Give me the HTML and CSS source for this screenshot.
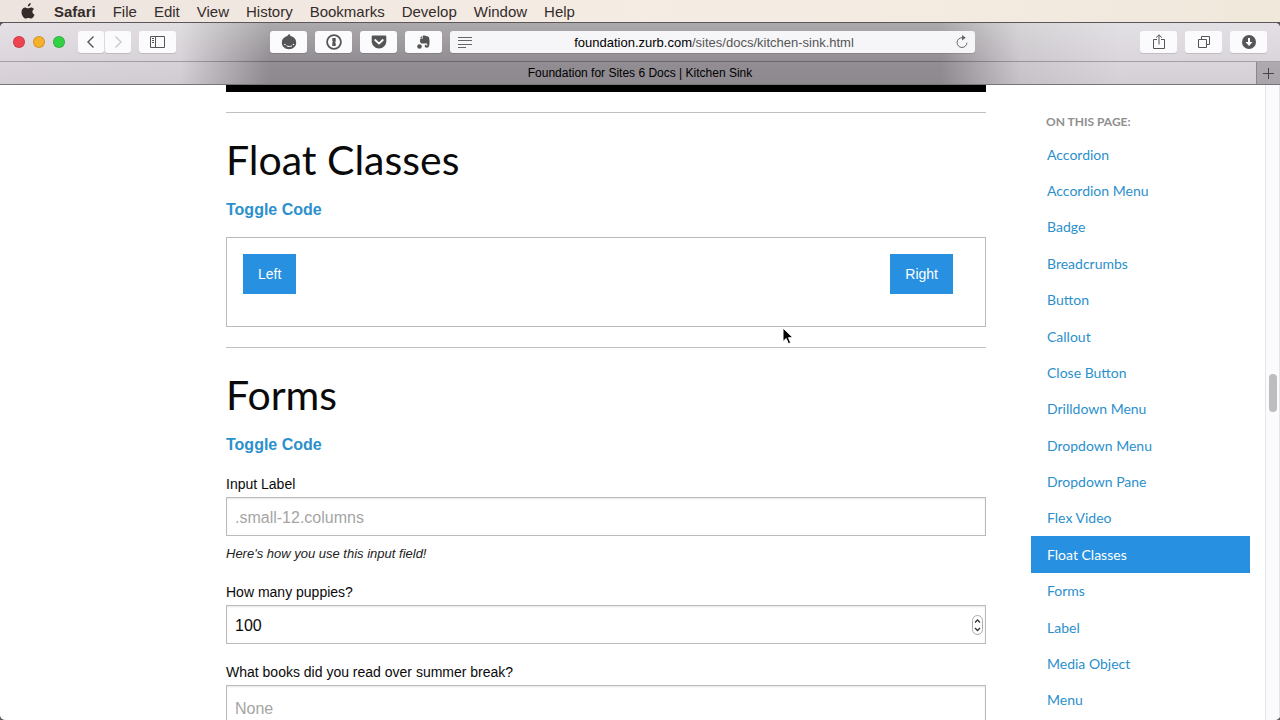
FILE: index.html
```html
<!DOCTYPE html>
<html lang="en">

<head>
    <meta charset="UTF-8" />
    <title>Foundation for Sites 6 Docs | Kitchen Sink</title>
    <link rel="stylesheet" href="styles.css">
</head>

<body>
    <nav class="menubar">
        <svg class="apple" width="14" height="17" viewBox="0 0 14 17" aria-hidden="true">
            <path d="M9.800 0c.1 1.900-1.400 3.600-3 3.600C6.600 1.900 8.200.1 9.800 0z" />
            <path d="M7 5.200c.8 0 1.700-.8 3.100-.8 1.100 0 2.200.6 2.900 1.500-2.400 1.500-2 4.700.6 5.700-.6 1.700-1.900 4-3.300 4-1.100 0-1.500-.6-2.900-.6s-1.800.6-2.800.6C2.800 15.600.5 12.200.5 9c0-3 1.900-4.600 3.700-4.600 1.300 0 2.100.8 2.800.8z" />
        </svg>
        <a class="app" href="#">Safari</a>
        <a href="#">File</a>
        <a href="#">Edit</a>
        <a href="#">View</a>
        <a href="#">History</a>
        <a href="#">Bookmarks</a>
        <a href="#">Develop</a>
        <a href="#">Window</a>
        <a href="#">Help</a>
    </nav>

    <div class="window">
        <header class="chrome">
            <div class="toolbar">
                <div class="tools">
                    <div class="lights">
                        <button class="light close" aria-label="Close"></button>
                        <button class="light minimize" aria-label="Minimize"></button>
                        <button class="light zoom" aria-label="Zoom"></button>
                    </div>
                    <div class="history">
                        <button class="tool narrow" aria-label="Back">
                            <svg width="10" height="14" viewBox="0 0 10 14"><path d="M7.500 1.500L2 7l5.500 5.500" fill="none" stroke="#555" stroke-width="1.400" /></svg>
                        </button>
                        <button class="tool narrow" aria-label="Forward">
                            <svg width="10" height="14" viewBox="0 0 10 14"><path d="M2.500 1.500L8 7l-5.500 5.500" fill="none" stroke="#c8c8ca" stroke-width="1.400" /></svg>
                        </button>
                    </div>
                    <button class="tool" aria-label="Sidebar">
                        <svg width="15" height="12" viewBox="0 0 15 12" fill="none" stroke="#555"><path d="M.5.5h14v11H.5zM5.500.5v11M2 2.500h2M2 4.500h2M2 6.500h2" /></svg>
                    </button>
                </div>
                <div class="center">
                    <button class="tool" aria-label="Ghostery">
                        <svg width="16" height="16" viewBox="0 0 16 16"><path d="M8 0c1.200.5 1.400 1.200 1.200 1.900 1 .1 1.700.4 2.400.9C13.800 4 15.200 6 15.200 8.500c0 4-3.200 6.700-7.200 6.700S.8 12.500.8 8.500c0-3 1.700-5 4.200-6C6.500 1.900 7.300 1.200 8 0z" fill="#555" /><path d="M5.500 11.800c1.800.9 3.800.9 5.600 0" stroke="#fff" fill="none" /><circle cx="3.900" cy="10.500" r=".7" fill="#fff" /><circle cx="12.500" cy="10.500" r=".7" fill="#fff" /></svg>
                    </button>
                    <button class="tool" aria-label="1Password">
                        <svg width="16" height="16" viewBox="0 0 16 16"><circle cx="8" cy="8" r="6.900" fill="none" stroke="#555" stroke-width="1.800" /><path d="M6.300 4h3.400v3.500l-.8.700.8.700V12H6.300V8.500l.8-.7-.8-.7z" fill="#555" /></svg>
                    </button>
                    <button class="tool" aria-label="Pocket">
                        <svg width="16" height="14" viewBox="0 0 16 14"><path d="M2 .5h12c.8 0 1.300.5 1.300 1.300v4.400c0 4-3.300 7.200-7.300 7.200S.7 10.200.7 6.200V1.800C.7 1 1.200.5 2 .5z" fill="#555" /><path d="M4.200 5L8 8.600 11.800 5" fill="none" stroke="#fff" stroke-width="1.800" stroke-linecap="round" stroke-linejoin="round" /></svg>
                    </button>
                    <button class="tool" aria-label="Evernote">
                        <svg width="16" height="16" viewBox="0 0 16 16"><path d="M6.300 1.700v2.200H4zM7 1.600c1.800-.3 2.900 0 3.600.6 1.500 0 2.300.5 2.600 2 .5 2.500.5 5-.1 7.900-.3 1.300-1.100 1.700-2.200 1.700-1.500 0-2.200-.8-2.200-1.700 0-1 .7-1.600 1.700-1.600v1.300h.8c.5-1 .1-2.300-1-2.600-1.200-.2-1.700.1-2.500.3-2 .2-3.200-.5-3.500-1.600-.3-1.100-.2-2.400.3-3.300H7z" fill="#555" /><circle cx="3.500" cy="12.500" r="2.300" fill="#555" /></svg>
                    </button>
                    <div class="address">
                        <svg width="14" height="11" viewBox="0 0 14 11" stroke="#666"><path d="M0 .5h14M0 3.500h14M0 7.500h14M0 10.500h8" /></svg>
                        <a class="url" href="#">foundation.zurb.com<span>/sites/docs/kitchen-sink.html</span></a>
                        <button class="reload" aria-label="Reload">
                            <svg width="12" height="14" viewBox="0 0 12 14"><path d="M7 2.700H6a4.900 4.900 0 1 0 4.900 5" fill="none" stroke="#666" /><path d="M6 0l3.800 2.700L6 5.400z" fill="#666" /></svg>
                        </button>
                    </div>
                </div>
                <div class="actions">
                    <button class="tool" aria-label="Share">
                        <svg width="12" height="16" viewBox="0 0 12 16" fill="none" stroke="#555"><path d="M4 5.500H.5v9h11v-9H8M6 10.500V1M3 3.700L6 .8l3 2.900" /></svg>
                    </button>
                    <button class="tool" aria-label="Show all tabs">
                        <svg width="12" height="12" viewBox="0 0 12 12" fill="none" stroke="#555"><path d="M.5 3.500h8v8h-8zM3.500 3.500v-3h8v8h-3" /></svg>
                    </button>
                    <button class="tool" aria-label="Downloads">
                        <svg width="14" height="14" viewBox="0 0 14 14"><circle cx="7" cy="7" r="7" fill="#555" /><path d="M6 3h2v4h2.500L7 11 3.500 7H6z" fill="#fff" /></svg>
                    </button>
                </div>
            </div>
            <div class="tabs">
                <div class="tab">Foundation for Sites 6 Docs | Kitchen Sink</div>
                <button class="new-tab" aria-label="New tab">
                    <svg width="11" height="11" viewBox="0 0 11 11" stroke="#444"><path d="M5.500 0v11M0 5.500h11" /></svg>
                </button>
            </div>
        </header>

        <div class="page">
            <main class="docs">
                <div class="video"></div>

                <section>
                    <h2>Float Classes</h2>
                    <a class="toggle" href="#">Toggle Code</a>
                    <div class="callout">
                        <button class="button">Left</button>
                        <button class="button">Right</button>
                    </div>
                </section>

                <section>
                    <h2>Forms</h2>
                    <a class="toggle" href="#">Toggle Code</a>
                    <form>
                        <label for="columns">Input Label</label>
                        <input type="text" id="columns" placeholder=".small-12.columns" aria-describedby="columnsHelp" />
                        <p class="help" id="columnsHelp">Here's how you use this input field!</p>

                        <label for="puppies">How many puppies?</label>
                        <div class="number">
                            <input type="number" id="puppies" value="100" />
                            <svg class="stepper" width="11" height="21" viewBox="0 0 11 21" fill="none"><rect x=".5" y=".5" width="10" height="19" rx="5" fill="#fff" stroke="#aaa" /><path d="M3 7.500L5.500 5 8 7.500M3 13l2.500 2.500L8 13" stroke="#333" stroke-width="1.300" /></svg>
                        </div>

                        <label for="books">What books did you read over summer break?</label>
                        <textarea id="books" placeholder="None"></textarea>
                    </form>
                </section>
            </main>

            <aside class="toc">
                <h3>On this page:</h3>
                <ul>
                    <li><a href="#">Accordion</a></li>
                    <li><a href="#">Accordion Menu</a></li>
                    <li><a href="#">Badge</a></li>
                    <li><a href="#">Breadcrumbs</a></li>
                    <li><a href="#">Button</a></li>
                    <li><a href="#">Callout</a></li>
                    <li><a href="#">Close Button</a></li>
                    <li><a href="#">Drilldown Menu</a></li>
                    <li><a href="#">Dropdown Menu</a></li>
                    <li><a href="#">Dropdown Pane</a></li>
                    <li><a href="#">Flex Video</a></li>
                    <li><a class="active" href="#">Float Classes</a></li>
                    <li><a href="#">Forms</a></li>
                    <li><a href="#">Label</a></li>
                    <li><a href="#">Media Object</a></li>
                    <li><a href="#">Menu</a></li>
                </ul>
            </aside>

            <div class="scrollbar">
                <div class="thumb"></div>
            </div>
        </div>
    </div>

    <svg class="cursor" width="12" height="19" viewBox="0 0 12 19" aria-hidden="true">
        <path d="M1 1v13.500l3.200-3 2.200 5.200 2.300-1-2.200-5H11z" fill="#000" stroke="#fff" />
    </svg>
</body>

</html>
```
FILE: styles.css
```css
* {
    box-sizing: border-box;
}

body {
    margin: 0;
    height: 100vh;
    display: flex;
    flex-direction: column;
    overflow: hidden;
    background: #5c5658;
    font-family: "Liberation Sans", Helvetica, Arial, sans-serif;
    color: #0a0a0a;
}

button {
    border: none;
    padding: 0;
    font-family: inherit;
    cursor: pointer;
}

a {
    color: #2b90cc;
    text-decoration: none;
}

svg {
    display: block;
    flex: none;
}

/* Menu bar */
.menubar {
    flex: none;
    display: flex;
    align-items: center;
    gap: 17px;
    height: 22px;
    padding-left: 21px;
    background: linear-gradient(90deg, #ede4df, #f5ede4 50%, #f1e8dc);
    font-size: 15px;
}

.menubar a {
    color: #352c2a;
}

.menubar .app {
    font-weight: bold;
}

.apple {
    margin-right: 2px;
    fill: #352c2a;
}

/* Browser window */
.window {
    flex: 1;
    min-height: 0;
    display: flex;
    flex-direction: column;
    margin-top: 1px;
    border-radius: 5px;
    overflow: hidden;
    background: #fff;
}

.chrome {
    flex: none;
    background:
        linear-gradient(rgba(255, 255, 255, 0.25), rgba(255, 255, 255, 0) 38px, rgba(0, 0, 0, 0.03)),
        linear-gradient(90deg, #dcd6dc 0, #d6d2d7 180px, #918d92 270px, #918d92 calc(100% - 340px), #cbc7cc calc(100% - 260px), #dad6dc calc(100% - 160px), #dad5db);
    border-bottom: 1px solid #77737a;
}

.toolbar {
    display: grid;
    grid-template-columns: 270px minmax(0, 1fr) 305px;
    align-items: center;
    height: 38px;
}

.tools,
.center,
.actions,
.lights,
.history {
    display: flex;
    align-items: center;
    gap: 8px;
}

.tools {
    padding-left: 13px;
}

.lights {
    margin-right: 5px;
}

.history {
    gap: 1px;
}

.actions {
    justify-content: flex-end;
    padding-right: 13px;
}

.light {
    width: 12px;
    height: 12px;
    border: 1px solid rgba(0, 0, 0, 0.15);
    border-radius: 50%;
}

.close {
    background: #ee4450;
}

.minimize {
    background: #f6b02c;
}

.zoom {
    background: #32d244;
}

.tool {
    flex: none;
    display: flex;
    align-items: center;
    justify-content: center;
    width: 37px;
    height: 22px;
    border-radius: 3px;
    background: #fbfafc;
    box-shadow: 0 1px 0 rgba(0, 0, 0, 0.12);
}

.narrow {
    width: 26px;
}

.address {
    flex: 1;
    display: flex;
    align-items: center;
    height: 22px;
    padding: 0 7px 0 8px;
    border-radius: 3px;
    background: #f6f5f8;
    box-shadow: 0 1px 0 rgba(0, 0, 0, 0.12);
}

.url {
    flex: 1;
    text-align: center;
    font-size: 13px;
    color: #000;
}

.url span {
    color: #555;
}

.reload {
    background: none;
}

.tabs {
    display: flex;
    height: 23px;
    border-top: 1px solid rgba(0, 0, 0, 0.25);
}

.tab {
    flex: 1;
    padding-left: 24px;
    text-align: center;
    font-size: 12px;
    line-height: 22px;
    color: #000;
}

.new-tab {
    display: flex;
    align-items: center;
    justify-content: center;
    width: 24px;
    border-left: 1px solid #8b878c;
    background: rgba(0, 0, 0, 0.2);
}

/* Docs page */
.page {
    flex: 1;
    min-height: 0;
    display: grid;
    grid-template-columns: minmax(0, 1fr) 219px 15px;
    column-gap: 15px;
    padding-left: 226px;
    overflow: hidden;
}

.docs {
    margin-right: 30px;
}

.video {
    height: 7px;
    margin-bottom: 20px;
    background: #000;
}

section {
    padding-top: 19px;
    margin-bottom: 20px;
    border-top: 1px solid #c0c0c0;
}

h2 {
    margin: 0 0 8px;
    font-family: Lato, sans-serif;
    font-size: 41px;
    font-weight: 400;
    line-height: 56px;
}

.toggle {
    display: block;
    margin-bottom: 13px;
    font-size: 16px;
    font-weight: bold;
    line-height: 28px;
}

.callout {
    display: flex;
    justify-content: space-between;
    padding: 16px 32px 32px 16px;
    border: 1px solid #bbb;
}

.button {
    height: 40px;
    padding: 0 15px;
    background: #2790e0;
    color: #fefefe;
    font-size: 14px;
}

label {
    display: block;
    font-size: 14px;
    line-height: 25px;
}

input,
textarea {
    display: block;
    width: 100%;
    height: 39px;
    margin: 0 0 16px;
    padding: 10px 8px 8px;
    border: 1px solid #bbb;
    border-radius: 0;
    box-shadow: inset 0 1px 2px rgba(10, 10, 10, 0.1);
    background: #fff;
    color: #0a0a0a;
    font-family: inherit;
    font-size: 16px;
    appearance: none;
}

textarea {
    height: 80px;
    padding-top: 14px;
    resize: none;
}

input::placeholder,
textarea::placeholder {
    color: #a5a5a5;
}

input[type="number"] {
    appearance: textfield;
}

.help {
    margin: -8px 0 16px;
    font-size: 13px;
    font-style: italic;
    line-height: 20px;
    color: #222;
}

.number {
    position: relative;
}

.stepper {
    position: absolute;
    top: 10px;
    right: 3px;
}

/* On this page */
.toc {
    padding-top: 27px;
}

.toc h3 {
    margin: 0 0 4px;
    padding-left: 15px;
    font-family: Lato, sans-serif;
    font-size: 12px;
    line-height: 20px;
    text-transform: uppercase;
    color: #8f8f8f;
}

.toc ul {
    display: grid;
    grid-auto-rows: 1fr;
    min-height: 582px;
    margin: 0;
    padding: 0;
    list-style: none;
}

.toc a {
    display: flex;
    align-items: center;
    height: 100%;
    padding-left: 16px;
    font-family: Lato, sans-serif;
    font-size: 14px;
}

.toc .active {
    background: #2790e0;
    color: #fefefe;
}

.scrollbar {
    position: relative;
    border: solid #e6e4e8;
    border-width: 0 1px;
    background: #fbfafc;
}

.thumb {
    position: absolute;
    top: 289px;
    right: 2px;
    width: 8px;
    height: 38px;
    border-radius: 4px;
    background: #bdbcbf;
}

.cursor {
    position: absolute;
    top: 327px;
    left: 782px;
}
```
